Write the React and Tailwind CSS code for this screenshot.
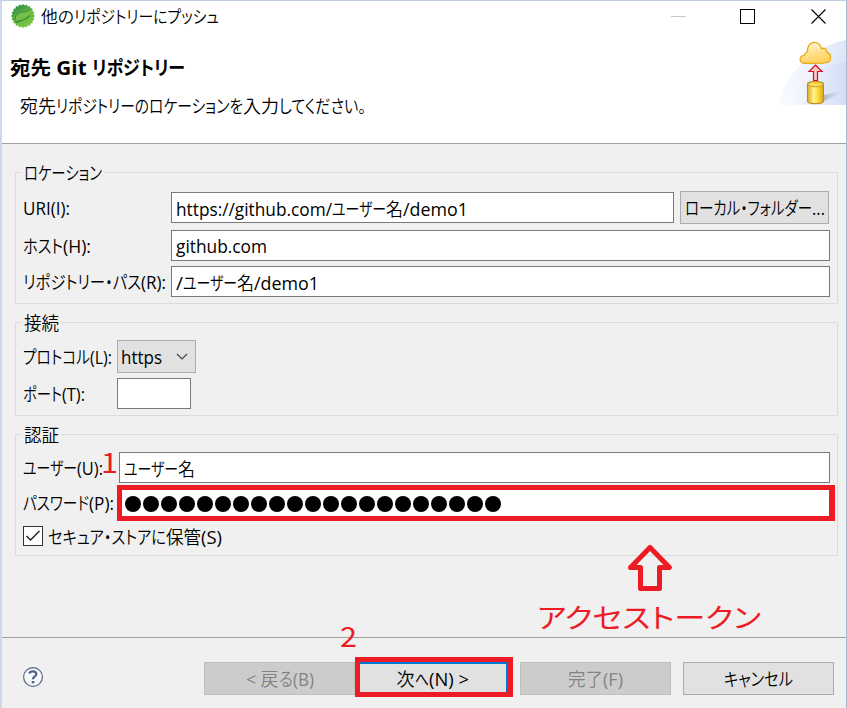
import { useLayoutEffect, useRef } from "react";

// Draws one run of text condensed or stretched to a given advance width.
function Run({ text, width, jp }) {
  const ref = useRef(null);
  useLayoutEffect(() => {
    const el = ref.current;
    el.style.transform = "none";
    el.style.transform = `scaleX(${width / el.getBoundingClientRect().width})`;
  }, [text, width]);
  return (
    <span className="block shrink-0" style={{ width }}>
      <span
        ref={ref}
        className={
          jp
            ? "inline-block origin-left whitespace-pre font-['Noto_Sans_CJK_JP',sans-serif] [font-feature-settings:'palt']"
            : "inline-block origin-left whitespace-pre font-['Open_Sans','Noto_Sans_CJK_JP',sans-serif]"
        }
      >
        {text}
      </span>
    </span>
  );
}

function Text({ runs, className = "", weight = "" }) {
  return (
    <span className={`flex shrink-0 items-baseline leading-6 ${className}`}>
      {runs.map(([text, width], i) => {
        const jp = /[\u3000-\u9fff]|^[12]$/.test(text);
        return (
          <span key={i} className={weight || (jp ? "font-[350]" : "font-normal")}>
            <Run text={text} width={width} jp={jp} />
          </span>
        );
      })}
    </span>
  );
}

function Group({ title, className = "", children }) {
  return (
    <fieldset className={`ml-[13px] w-[823px] border border-[#dcdcdc] ${className}`}>
      <legend className="ml-[6px] h-[27px] px-[2px]">
        <Text runs={title} className="pt-px" />
      </legend>
      {children}
    </fieldset>
  );
}

function Field({ runs, className }) {
  return (
    <div className={`flex h-[31px] shrink-0 items-center border border-[#7a7a7a] bg-white pl-1 ${className}`}>
      {runs && <Text runs={runs} className="pt-px" />}
    </div>
  );
}

function SpringIcon() {
  const spikes = Array.from({ length: 40 }, (_, i) => {
    const r = i % 2 ? 10.6 : 12;
    const a = (i * Math.PI) / 20;
    return `${12 + r * Math.cos(a)},${12 + r * Math.sin(a)}`;
  }).join(" ");
  return (
    <svg width="24" height="24" viewBox="0 0 24 24" className="shrink-0">
      <defs>
        <linearGradient id="leafBg" x1="0.1" y1="0" x2="0.7" y2="1">
          <stop offset="0" stopColor="#1f8a43" />
          <stop offset="0.600" stopColor="#6cb944" />
          <stop offset="1" stopColor="#7fc843" />
        </linearGradient>
      </defs>
      <polygon points={spikes} fill="url(#leafBg)" />
      <path d="M20.500 4C18.500 8 13 7.500 9 8.700C5 10 3.800 13 4.600 17C8 13.500 13 15 17 12.500C20 10.500 21.300 7 20.500 4Z" fill="#74bf45" />
      <path d="M20.500 4C18.500 8 13 7.500 9 8.700C5 10 3.800 13 4.600 17" fill="none" stroke="#2f7f3c" strokeWidth="0.700" />
      <path d="M4.500 18.500C9 16.500 14.500 17 18.500 11.500" fill="none" stroke="#2c8038" strokeWidth="1.200" />
    </svg>
  );
}

function PushBanner() {
  return (
    <svg width="67" height="65" viewBox="0 0 67 65">
      <defs>
        <linearGradient id="bg1" x1="0" x2="1">
          <stop offset="0" stopColor="#f8faff" />
          <stop offset="0.500" stopColor="#eff3fc" />
          <stop offset="1" stopColor="#dde5f6" />
        </linearGradient>
        <linearGradient id="bg2" x1="0" x2="1">
          <stop offset="0" stopColor="#ffffff" stopOpacity="0.500" />
          <stop offset="1" stopColor="#d3def5" />
        </linearGradient>
        <linearGradient id="cloud" x1="0" y1="0" x2="0.300" y2="1">
          <stop offset="0" stopColor="#fff3cc" />
          <stop offset="1" stopColor="#ffd25f" />
        </linearGradient>
        <linearGradient id="cyl" x1="0" x2="1">
          <stop offset="0" stopColor="#e2a92c" />
          <stop offset="0.400" stopColor="#fff58c" />
          <stop offset="0.700" stopColor="#f6d52e" />
          <stop offset="1" stopColor="#dda322" />
        </linearGradient>
        <linearGradient id="shade" x1="0" x2="1">
          <stop offset="0" stopColor="#b4b9c9" />
          <stop offset="1" stopColor="#d5dcec" stopOpacity="0.300" />
        </linearGradient>
      </defs>
      <path d="M-1 65C4 36 34 6 67 0V65Z" fill="url(#bg1)" />
      <path d="M-1 65C18 44 40 27 67 21V65Z" fill="url(#bg2)" />
      <path d="M45 61L63 53L57 52L45 55Z" fill="url(#shade)" />
      <g transform="translate(-0.700 0)">
        <path d="M24.500 23C20.500 21.500 21 15.500 26 15.300C26.500 12.500 28.500 12.800 29 11.500C29.500 0.500 41 -0.500 43 8.500C47 7.500 49 9.500 48.500 12.500C53.500 13.500 53.500 21.500 48.500 22.500C46 23.600 27 23.600 24.500 23Z" fill="url(#cloud)" stroke="#e9ab1b" strokeWidth="1.300" />
        <path d="M31 9C32 3.500 39 3 41 9" fill="none" stroke="#fff8e4" strokeWidth="1" />
      </g>
      <path d="M36.500 25L43 31.500H38.500V40.500H34.500V31.500H30Z" fill="#f9c6c6" stroke="#d60f1a" strokeWidth="1.200" />
      <path d="M28.500 44C28.500 40.800 44.500 40.800 44.500 44V61C44.500 64.500 28.500 64.500 28.500 61Z" fill="url(#cyl)" stroke="#bd8a25" strokeWidth="1.100" />
      <ellipse cx="36.500" cy="44.300" rx="7.500" ry="2.500" fill="#f7dc53" stroke="#c79525" strokeWidth="0.900" />
    </svg>
  );
}

const button = "flex h-[33px] shrink-0 items-center justify-center border";

export default function App() {
  return (
    <div className="relative flex h-[708px] w-[847px] flex-col overflow-hidden border-t border-r border-l-2 border-t-[#bfcbe0] border-r-[#a9b8cc] border-l-[#cdd8ea] bg-[#f0f0f0] text-[18px] text-black">
      <header className="flex h-[143px] shrink-0 justify-between border-b border-[#a0a0a0] bg-white">
        <div className="flex flex-col">
          <div className="flex items-center gap-[6px] pt-[2px] pl-[9px]">
            <SpringIcon />
            <Text runs={[["他の", 33], ["リポジトリーにプッシュ", 145]]} className="pt-px text-[17.500px]" />
          </div>
          <Text
            runs={[["宛先", 41], [" Git ", 41], ["リポジトリー", 93]]}
            className="mt-[27px] pl-[8px] text-[19.500px]"
            weight="font-bold"
          />
          <Text
            runs={[["宛先", 36], ["リポジトリーのロケーションを", 187], ["入力", 36], ["してください。", 87]]}
            className="mt-[13px] pl-[18px]"
          />
        </div>
        <div className="flex flex-col items-end">
          <div className="flex h-[39px] pr-[19px]">
            <svg width="157" height="32" viewBox="0 0 157 32" fill="none">
              <path d="M1 15.500H16" stroke="#c8c8c8" />
              <rect x="70.500" y="8.500" width="14" height="14" stroke="#000" />
              <path d="M141.500 8.500L155.500 22.500M155.500 8.500L141.500 22.500" stroke="#000" strokeWidth="1.100" />
            </svg>
          </div>
          <PushBanner />
        </div>
      </header>

      <Group title={[["ロケーション", 78]]} className="mt-[15px] h-[145px]">
        <div className="flex items-start pt-[5px] pl-[7px]">
          <Text runs={[["URI(I):", 47]]} className="w-[148px] pt-[5px]" />
          <Field
            className="mt-px w-[503px]"
            runs={[["https://github.com/", 156], ["ユーザー", 54], ["名", 17], ["/demo1", 65]]}
          />
          <div className={`${button} ml-[6px] w-[149px] border-[#adadad] bg-[#e1e1e1]`}>
            <Text runs={[["ローカル・フォルダー", 127], ["...", 13]]} className="pb-px" />
          </div>
        </div>
        <div className="flex items-start pt-[6px] pl-[7px]">
          <Text runs={[["ホスト", 40], ["(H):", 28]]} className="w-[148px] pt-[3px]" />
          <Field className="w-[659px]" runs={[["github.com", 91]]} />
        </div>
        <div className="flex items-start pt-[5px] pl-[7px]">
          <Text runs={[["リポジトリー・パス", 118], ["(R):", 25]]} className="w-[148px] pt-[3px]" />
          <Field className="w-[659px]" runs={[["/", 7], ["ユーザー", 54], ["名", 17], ["/demo1", 65]]} />
        </div>
      </Group>

      <Group title={[["接続", 35]]} className="mt-[5px] h-[107px]">
        <div className="flex items-start pt-[4px] pl-[7px]">
          <Text runs={[["プロトコル", 67], ["(L):", 22]]} className="w-[94px] pt-[4px]" />
          <div className={`${button} w-[79px] gap-[14px] border-[#adadad] bg-[#e1e1e1] pr-[5px]`}>
            <Text runs={[["https", 41]]} className="pt-px" />
            <svg width="12" height="8" viewBox="0 0 12 8" fill="none">
              <path d="M1 1L6 6L11 1" stroke="#444" strokeWidth="1.200" />
            </svg>
          </div>
        </div>
        <div className="flex items-start pt-[5px] pl-[7px]">
          <Text runs={[["ポート", 39], ["(T):", 23]]} className="w-[94px] pt-[3px]" />
          <Field className="w-[74px]" />
        </div>
      </Group>

      <Group title={[["認証", 35]]} className="mt-[5px] h-[135px]">
        <div className="flex items-start pt-[4px] pl-[7px]">
          <Text runs={[["ユーザー", 54], ["(U):", 26]]} className="w-[96px] pt-[3px]" />
          <Field className="w-[711px]" runs={[["ユーザー", 54], ["名", 17]]} />
        </div>
        <div className="flex items-start pt-[2px] pl-[7px]">
          <Text runs={[["パスワード", 66], ["(P):", 25]]} className="w-[94px] pt-[5px]" />
          <div className="flex h-[36px] w-[718px] shrink-0 items-center gap-[2px] border-[5px] border-[#ed1c24] bg-white pt-px pl-[3px]">
            {Array.from({ length: 21 }, (_, i) => (
              <span key={i} className="h-4 w-4 rounded-full bg-black" />
            ))}
            <span className="-mt-px ml-auto h-[26px] w-px bg-[#0078d7]" />
          </div>
        </div>
        <div className="flex items-start pt-[5px] pl-[7px]">
          <span className="flex h-5 w-5 items-center justify-center border border-[#333] bg-white">
            <svg width="16" height="14" viewBox="0 0 16 14" fill="none">
              <path d="M1.500 7L5.500 11L14.500 2" stroke="#222" strokeWidth="1.500" />
            </svg>
          </span>
          <Text runs={[["セキュア・ストアに", 118], ["保管", 35], ["(S)", 21]]} className="-mt-[2px] pl-[5px]" />
        </div>
      </Group>

      <footer className="mt-[81px] flex h-[70px] shrink-0 items-start border-t border-[#a0a0a0] pt-[24px]">
        <svg width="20" height="20" viewBox="0 0 20 20" fill="none" className="mt-[5px] ml-[21px]">
          <circle cx="10" cy="10" r="9.400" fill="#f6f8fb" stroke="#596780" strokeWidth="1.200" />
          <path d="M6.300 6.600C7 3.600 13.500 3.300 13.300 7.200C13.200 9.500 10 9.500 10 12.300" stroke="#50608a" strokeWidth="2.300" />
          <rect x="8.700" y="14" width="2.600" height="2.300" fill="#50608a" />
        </svg>
        <div className={`${button} ml-[161px] w-[151px] border-[#bfbfbf] bg-[#ccc] text-[#838383]`}>
          <Text runs={[["< ", 15], ["戻", 18], ["る", 14], ["(B)", 21]]} className="pb-px" />
        </div>
        <div className="-mt-[5px] flex h-[40px] w-[158px] shrink-0 items-center justify-center border-[5px] border-[#ed1c24] bg-[#e1e1e1]">
          <div className="flex h-full w-full items-center justify-center border-t-2 border-r-2 border-[#0078d7]">
            <Text runs={[["次", 18], ["へ", 14], ["(N) >", 40]]} className="pr-px" />
          </div>
        </div>
        <div className={`${button} ml-[7px] w-[151px] border-[#bfbfbf] bg-[#ccc] text-[#838383]`}>
          <Text runs={[["完了", 35], ["(F)", 20]]} className="pb-px" />
        </div>
        <div className={`${button} ml-[12px] w-[151px] border-[#adadad] bg-[#e1e1e1]`}>
          <Text runs={[["キャンセル", 69]]} className="pb-px" />
        </div>
      </footer>

      <div className="absolute top-[448px] left-[99px] text-[28px] text-[#ed1c24]">
        <Text runs={[["1", 17]]} weight="font-normal" />
      </div>
      <div className="absolute top-[622px] left-[338px] text-[28px] text-[#ed1c24]">
        <Text runs={[["2", 17]]} weight="font-normal" />
      </div>
      <svg className="absolute top-[542px] left-[624px]" width="48" height="50" viewBox="0 0 48 50" fill="none">
        <path d="M24 4.500L43.500 24.500H33.500V45.500H14.500V24.500H4.500Z" stroke="#ed1c24" strokeWidth="5" strokeLinejoin="round" />
      </svg>
      <div className="absolute top-[604px] left-[535px] text-[27px] text-[#ed1c24]">
        <Text runs={[["アクセストークン", 224]]} weight="font-normal" />
      </div>
      <div className="absolute top-[353px] left-[844px] h-[5px] w-px bg-[#444c58]" />
    </div>
  );
}
